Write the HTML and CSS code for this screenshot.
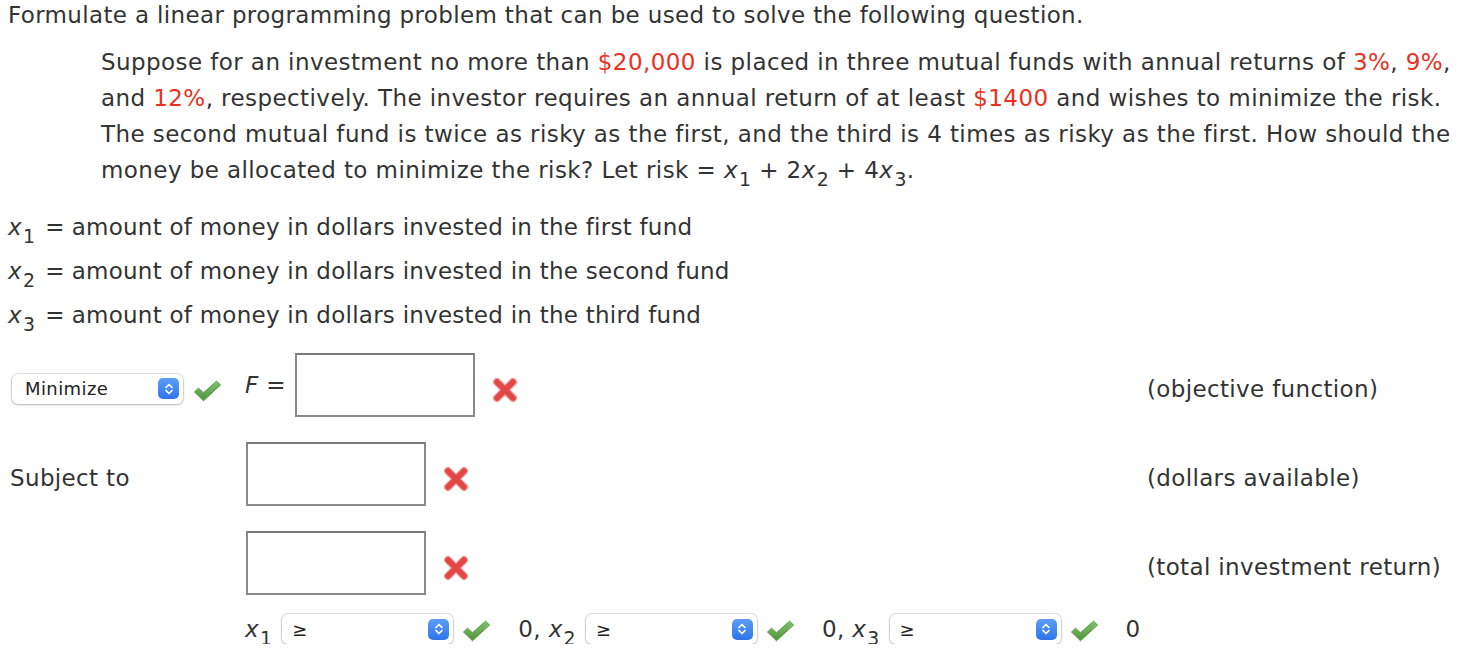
FILE: index.html
```html
<!DOCTYPE html>
<html>
<head>
<meta charset="utf-8">
<title>Linear programming</title>
<link rel="stylesheet" href="styles.css">
</head>
<body>
<div class="page">
  <p class="title">Formulate a linear programming problem that can be used to solve the following question.</p>
  <p class="problem">Suppose for an investment no more than <span class="red">$20,000</span> is placed in three mutual funds with annual returns of <span class="red">3%</span>, <span class="red">9%</span>,<br>and <span class="red">12%</span>, respectively. The investor requires an annual return of at least <span class="red">$1400</span> and wishes to minimize the risk.<br>The second mutual fund is twice as risky as the first, and the third is 4 times as risky as the first. How should the<br>money be allocated to minimize the risk? Let risk = <span class="v">x</span><sub>1</sub> + 2<span class="v">x</span><sub>2</sub> + 4<span class="v">x</span><sub>3</sub>.</p>

  <div class="vars">
    <div class="var"><span class="v">x</span><sub>1</sub><span class="eq">=</span>amount of money in dollars invested in the first fund</div>
    <div class="var"><span class="v">x</span><sub>2</sub><span class="eq">=</span>amount of money in dollars invested in the second fund</div>
    <div class="var"><span class="v">x</span><sub>3</sub><span class="eq">=</span>amount of money in dollars invested in the third fund</div>
  </div>

  <div class="row r1">
    <div class="c1">
      <div class="sel sel-min"><span class="sel-text">Minimize</span><span class="btn"><svg width="10" height="14" viewBox="0 0 10 14"><polyline points="2,5.5 5,2.5 8,5.5" fill="none" stroke="#fff" stroke-width="1.7" stroke-linecap="round" stroke-linejoin="round"/><polyline points="2,8.5 5,11.5 8,8.5" fill="none" stroke="#fff" stroke-width="1.7" stroke-linecap="round" stroke-linejoin="round"/></svg></span></div>
      <svg class="check" width="29" height="22" viewBox="0 0 29 22"><defs><linearGradient id="g1" x1="0" y1="0" x2="0" y2="1"><stop offset="0" stop-color="#80c46a"/><stop offset="1" stop-color="#4f933f"/></linearGradient></defs><path d="M1.5,12 L5.5,8.2 L10.5,12.8 L23.5,1.2 L27.5,5 L10.5,20.8 Z" fill="url(#g1)" stroke="#55973f" stroke-width="1" stroke-linejoin="round"/></svg>
    </div>
    <div class="c2">
      <span class="feq"><span class="v">F</span> =</span>
      <div class="box"></div>
      <svg class="cross" width="26" height="26" viewBox="0 0 26 26"><g stroke-linecap="round"><line x1="5" y1="5" x2="21" y2="21" stroke="#f29a9a" stroke-width="8"/><line x1="21" y1="5" x2="5" y2="21" stroke="#f29a9a" stroke-width="8"/><line x1="5" y1="5" x2="21" y2="21" stroke="#e24646" stroke-width="5.5"/><line x1="21" y1="5" x2="5" y2="21" stroke="#e24646" stroke-width="5.5"/></g></svg>
    </div>
    <div class="c3">(objective function)</div>
  </div>

  <div class="row r2">
    <div class="c1 subj">Subject to</div>
    <div class="c2">
      <div class="box"></div>
      <svg class="cross" width="26" height="26" viewBox="0 0 26 26"><g stroke-linecap="round"><line x1="5" y1="5" x2="21" y2="21" stroke="#f29a9a" stroke-width="8"/><line x1="21" y1="5" x2="5" y2="21" stroke="#f29a9a" stroke-width="8"/><line x1="5" y1="5" x2="21" y2="21" stroke="#e24646" stroke-width="5.5"/><line x1="21" y1="5" x2="5" y2="21" stroke="#e24646" stroke-width="5.5"/></g></svg>
    </div>
    <div class="c3">(dollars available)</div>
  </div>

  <div class="row r3">
    <div class="c1"></div>
    <div class="c2">
      <div class="box"></div>
      <svg class="cross" width="26" height="26" viewBox="0 0 26 26"><g stroke-linecap="round"><line x1="5" y1="5" x2="21" y2="21" stroke="#f29a9a" stroke-width="8"/><line x1="21" y1="5" x2="5" y2="21" stroke="#f29a9a" stroke-width="8"/><line x1="5" y1="5" x2="21" y2="21" stroke="#e24646" stroke-width="5.5"/><line x1="21" y1="5" x2="5" y2="21" stroke="#e24646" stroke-width="5.5"/></g></svg>
    </div>
    <div class="c3">(total investment return)</div>
  </div>

  <div class="row r4">
    <div class="c1"></div>
    <div class="c2 nonneg">
      <span class="term"><span class="v">x</span><sub>1</sub></span>
      <div class="sel sel-ge"><span class="sel-text">≥</span><span class="btn"><svg width="10" height="14" viewBox="0 0 10 14"><polyline points="2,5.5 5,2.5 8,5.5" fill="none" stroke="#fff" stroke-width="1.7" stroke-linecap="round" stroke-linejoin="round"/><polyline points="2,8.5 5,11.5 8,8.5" fill="none" stroke="#fff" stroke-width="1.7" stroke-linecap="round" stroke-linejoin="round"/></svg></span></div>
      <svg class="check" width="29" height="22" viewBox="0 0 29 22"><path d="M1.5,12 L5.5,8.2 L10.5,12.8 L23.5,1.2 L27.5,5 L10.5,20.8 Z" fill="url(#g1)" stroke="#55973f" stroke-width="1" stroke-linejoin="round"/></svg>
      <span class="term">0, <span class="v">x</span><sub>2</sub></span>
      <div class="sel sel-ge"><span class="sel-text">≥</span><span class="btn"><svg width="10" height="14" viewBox="0 0 10 14"><polyline points="2,5.5 5,2.5 8,5.5" fill="none" stroke="#fff" stroke-width="1.7" stroke-linecap="round" stroke-linejoin="round"/><polyline points="2,8.5 5,11.5 8,8.5" fill="none" stroke="#fff" stroke-width="1.7" stroke-linecap="round" stroke-linejoin="round"/></svg></span></div>
      <svg class="check" width="29" height="22" viewBox="0 0 29 22"><path d="M1.5,12 L5.5,8.2 L10.5,12.8 L23.5,1.2 L27.5,5 L10.5,20.8 Z" fill="url(#g1)" stroke="#55973f" stroke-width="1" stroke-linejoin="round"/></svg>
      <span class="term">0, <span class="v">x</span><sub>3</sub></span>
      <div class="sel sel-ge"><span class="sel-text">≥</span><span class="btn"><svg width="10" height="14" viewBox="0 0 10 14"><polyline points="2,5.5 5,2.5 8,5.5" fill="none" stroke="#fff" stroke-width="1.7" stroke-linecap="round" stroke-linejoin="round"/><polyline points="2,8.5 5,11.5 8,8.5" fill="none" stroke="#fff" stroke-width="1.7" stroke-linecap="round" stroke-linejoin="round"/></svg></span></div>
      <svg class="check" width="29" height="22" viewBox="0 0 29 22"><path d="M1.5,12 L5.5,8.2 L10.5,12.8 L23.5,1.2 L27.5,5 L10.5,20.8 Z" fill="url(#g1)" stroke="#55973f" stroke-width="1" stroke-linejoin="round"/></svg>
      <span class="term">0</span>
    </div>
    <div class="c3"></div>
  </div>
</div>
</body>
</html>
```

FILE: styles.css
```css
* { box-sizing: border-box; }

body {
  margin: 0;
  background: #ffffff;
  color: #333333;
  font-family: "DejaVu Sans", Verdana, sans-serif;
  font-size: 23px;
  letter-spacing: 0.35px;
}

.page {
  padding: 0 8px;
}

.title {
  margin: 0;
  line-height: 30px;
  white-space: nowrap;
}

.problem {
  margin: 14px 0 0 93px;
  line-height: 36px;
  white-space: nowrap;
  letter-spacing: 0.42px;
}

.red { color: #e8311f; }

.v { font-style: italic; }

sub {
  font-size: 0.82em;
  vertical-align: -0.4em;
  line-height: 0;
  font-style: normal;
  margin-left: 1px;
}

.vars { margin-top: 17px; }

.var {
  line-height: 44px;
  white-space: nowrap;
  letter-spacing: 0.25px;
}

.var .eq { margin: 0 7px 0 10px; }

.row {
  display: grid;
  grid-template-columns: 237px 902px auto;
  align-items: center;
  white-space: nowrap;
}

.r1 { margin-top: 16px; }
.r2 { margin-top: 25px; }
.r3 { margin-top: 25px; }
.r4 { margin-top: 19px; }

.c1, .c2 {
  display: flex;
  align-items: center;
}

.c3 { padding-top: 8px; }
.subj { padding-left: 2px; padding-top: 8px; }

.sel {
  display: flex;
  align-items: center;
  justify-content: space-between;
  flex: none;
  width: 171px;
  height: 30px;
  background: #fff;
  border-radius: 6px;
  box-shadow: 0 0 0 1px rgba(0,0,0,0.10), 0 1px 3px rgba(0,0,0,0.22);
  padding: 0 4px 0 13px;
  font-size: 18px;
  letter-spacing: 0.4px;
  color: #222;
}

.sel-min { margin-left: 4px; margin-top: 7px; }

.btn {
  width: 21px;
  height: 21px;
  border-radius: 5px;
  background: linear-gradient(#5c9ef8, #2d74ed);
  display: flex;
  align-items: center;
  justify-content: center;
}

.check { flex: none; margin-left: 10px; margin-top: 12px; }

.feq { width: 50px; }

.box {
  width: 180px;
  height: 64px;
  border: 2px solid #8a8a8a;
  border-top-color: #7a7a7a;
  background: #fff;
}

.r2 .box, .r3 .box { margin-left: 1px; }

.cross { margin-left: 17px; margin-top: 10px; }

.nonneg .term { flex: none; margin-right: 10px; }
.nonneg .check { margin-left: 9px; margin-right: 27px; margin-top: 4px; }
.nonneg .sel { padding-left: 10px; }
```
